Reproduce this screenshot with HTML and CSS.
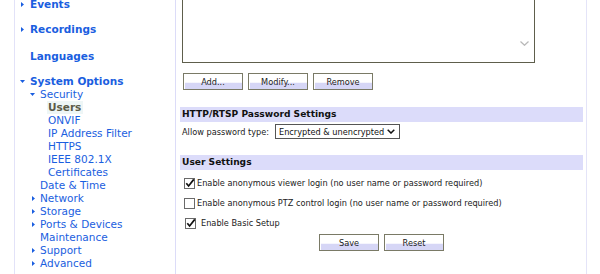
FILE: index.html
```html
<!DOCTYPE html>
<html>
<head>
<meta charset="utf-8">
<link rel="stylesheet" href="styles.css">
</head>
<body>
<div class="page">
  <nav class="nav">
    <ul class="menu">
      <li class="top"><a class="link"><span class="mk"><svg class="tri-r" width="3" height="5" viewBox="0 0 3 5"><path d="M0 0L3 2.5L0 5Z"/></svg></span>Events</a></li>
      <li class="top before-lang"><a class="link"><span class="mk"><svg class="tri-r" width="3" height="5" viewBox="0 0 3 5"><path d="M0 0L3 2.5L0 5Z"/></svg></span>Recordings</a></li>
      <li class="top"><a class="link"><span class="mk"></span>Languages</a></li>
      <li class="top open"><a class="link"><span class="mk"><svg class="tri-d" width="5" height="3" viewBox="0 0 5 3"><path d="M0 0L5 0L2.5 3Z"/></svg></span>System Options</a>
        <ul class="sub">
          <li><a class="link"><span class="mk"><svg class="tri-d" width="5" height="3" viewBox="0 0 5 3"><path d="M0 0L5 0L2.5 3Z"/></svg></span>Security</a>
            <ul class="sub2">
              <li><a class="link current">Users</a></li>
              <li><a class="link">ONVIF</a></li>
              <li><a class="link">IP Address Filter</a></li>
              <li><a class="link">HTTPS</a></li>
              <li><a class="link">IEEE 802.1X</a></li>
              <li><a class="link">Certificates</a></li>
            </ul>
          </li>
          <li><a class="link"><span class="mk"></span>Date &amp; Time</a></li>
          <li><a class="link"><span class="mk"><svg class="tri-r2" width="3" height="5" viewBox="0 0 3 5"><path d="M0 0L3 2.5L0 5Z"/></svg></span>Network</a></li>
          <li><a class="link"><span class="mk"><svg class="tri-r2" width="3" height="5" viewBox="0 0 3 5"><path d="M0 0L3 2.5L0 5Z"/></svg></span>Storage</a></li>
          <li><a class="link"><span class="mk"><svg class="tri-r2" width="3" height="5" viewBox="0 0 3 5"><path d="M0 0L3 2.5L0 5Z"/></svg></span>Ports &amp; Devices</a></li>
          <li><a class="link"><span class="mk"></span>Maintenance</a></li>
          <li><a class="link"><span class="mk"><svg class="tri-r2" width="3" height="5" viewBox="0 0 3 5"><path d="M0 0L3 2.5L0 5Z"/></svg></span>Support</a></li>
          <li><a class="link"><span class="mk"><svg class="tri-r2" width="3" height="5" viewBox="0 0 3 5"><path d="M0 0L3 2.5L0 5Z"/></svg></span>Advanced</a></li>
        </ul>
      </li>
    </ul>
  </nav>
  <main class="content">
    <div class="listbox">
      <svg class="chev" width="9" height="5" viewBox="0 0 9 5"><path d="M0.5 0.5L4.5 4.3L8.5 0.5" fill="none" stroke="#b8b8b8" stroke-width="1.2"/></svg>
    </div>
    <div class="btnrow">
      <button class="btn">Add...</button>
      <button class="btn">Modify...</button>
      <button class="btn">Remove</button>
    </div>
    <div class="bar bar1">HTTP/RTSP Password Settings</div>
    <div class="row">
      <span class="label">Allow password type:</span>
      <span class="select"><span class="seltext">Encrypted &amp; unencrypted</span><svg width="8" height="5" viewBox="0 0 8 5"><path d="M0.7 0.7L4 4L7.3 0.7" fill="none" stroke="#111" stroke-width="1.5"/></svg></span>
    </div>
    <div class="bar bar2">User Settings</div>
    <div class="checks">
      <div class="check"><svg class="cb" width="11" height="11" viewBox="0 0 11 11"><rect x="0.5" y="0.5" width="10" height="10" fill="#fff" stroke="#6a6a6a"/><path d="M2.3 5.2L4.6 8L9.8 1.4" fill="none" stroke="#111" stroke-width="1.7"/></svg><span>Enable anonymous viewer login (no user name or password required)</span></div>
      <div class="check"><svg class="cb" width="11" height="11" viewBox="0 0 11 11"><rect x="0.5" y="0.5" width="10" height="10" fill="#fff" stroke="#6a6a6a"/></svg><span>Enable anonymous PTZ control login (no user name or password required)</span></div>
      <div class="check third"><svg class="cb" width="11" height="11" viewBox="0 0 11 11"><rect x="0.5" y="0.5" width="10" height="10" fill="#fff" stroke="#6a6a6a"/><path d="M2.3 5.2L4.6 8L9.8 1.4" fill="none" stroke="#111" stroke-width="1.7"/></svg><span>Enable Basic Setup</span></div>
    </div>
    <div class="actions">
      <button class="btn">Save</button>
      <button class="btn">Reset</button>
    </div>
  </main>
</div>
</body>
</html>
```
FILE: styles.css
```css
html, body {
  margin: 0;
  padding: 0;
  background: #fff;
  height: 100%;
  overflow: hidden;
}
.page {
  display: flex;
  padding-left: 14px;
  height: 274px;
  font-family: "DejaVu Sans", Verdana, sans-serif;
}
.nav {
  width: 160px;
  border-left: 1px solid #e2e2f8;
  flex: none;
}
.menu, .sub, .sub2 {
  list-style: none;
  margin: 0;
  padding: 0;
}
.menu {
  margin-top: -2px;
}
.link {
  display: flex;
  align-items: center;
  height: 13px;
  line-height: 13px;
  font-size: 10.5px;
  color: #1a5ee0;
  white-space: nowrap;
}
.top > .link {
  font-weight: bold;
  padding-left: 5px;
}
.top {
  margin-bottom: 12px;
}
.top.before-lang {
  margin-bottom: 14px;
}
.top.open {
  margin-bottom: 0;
}
.mk {
  display: inline-flex;
  align-items: center;
  width: 10px;
  height: 13px;
  flex: none;
}
.mk svg {
  fill: #1a5ee0;
}
.tri-r { margin-left: 1px; }
.tri-r2 { margin-left: 2px; }
.tri-d { margin-left: 0; }
.sub {
  padding-left: 15px;
}
.sub2 {
  padding-left: 18px;
}
.current {
  font-weight: bold;
  color: #5b5b47;
  background: #eef6f6;
  width: max-content;
  padding-right: 2px;
  margin-left: -1px;
  padding-left: 1px;
}
.content {
  width: 403px;
  border-left: 1px solid #dcdcf8;
  border-right: 1px solid #e4e4f8;
  padding-left: 4px;
  padding-right: 3px;
  flex: none;
  font-size: 8.2px;
  color: #222;
}
.listbox {
  margin-left: 2px;
  border: 1px solid #5e5e4c;
  border-top: none;
  display: flex;
  justify-content: flex-end;
  align-items: flex-end;
  padding: 0 5px 16px 0;
  box-sizing: content-box;
  width: 346px;
  height: 46px;
}
.btnrow {
  display: flex;
  gap: 5px;
  margin-top: 10px;
  margin-left: 3px;
}
.btn {
  width: 60px;
  height: 17px;
  padding: 0;
  margin: 0;
  font-family: "DejaVu Sans", Verdana, sans-serif;
  font-size: 8.2px;
  color: #222;
  border: 1px solid #7a7a66;
  box-shadow: inset 1px 1px 0 #fff;
  background: linear-gradient(to bottom, #ffffff 0%, #ffffff 55%, #d6d6f6 62%, #d6d6f6 100%);
  line-height: 14px;
}
.bar {
  height: 15px;
  line-height: 15px;
  background: #dcdcfa;
  font-weight: bold;
  font-size: 9.1px;
  color: #111;
  padding-left: 2px;
}
.bar1 {
  margin-top: 17px;
}
.row {
  display: flex;
  align-items: center;
  margin-top: 2px;
  padding-left: 2px;
  height: 15px;
}
.label {
  width: 93px;
  flex: none;
}
.select {
  display: inline-flex;
  align-items: center;
  justify-content: space-between;
  box-sizing: border-box;
  width: 125px;
  height: 15px;
  border: 1px solid #555;
  padding: 0 4px 0 3px;
  background: #fff;
  color: #111;
}
.bar2 {
  margin-top: 16px;
}
.checks {
  margin-top: 3px;
}
.check {
  display: flex;
  align-items: center;
  height: 20px;
  padding-left: 4px;
  gap: 2px;
  color: #222;
}
.check.third {
  padding-left: 5px;
  gap: 5px;
}
.cb {
  flex: none;
}
.actions {
  display: flex;
  justify-content: center;
  gap: 5px;
  margin-top: 1px;
}
```
